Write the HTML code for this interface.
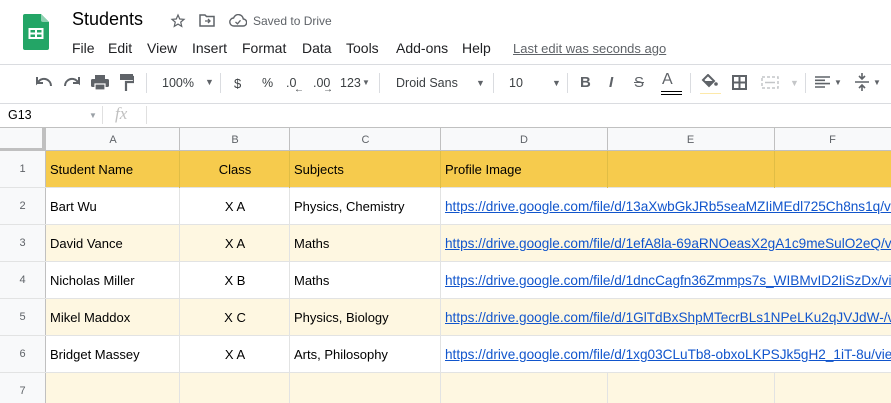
<!DOCTYPE html>
<html><head><meta charset="utf-8"><style>
*{margin:0;padding:0;box-sizing:border-box}
body{width:891px;height:403px;overflow:hidden;background:#fff;font-family:"Liberation Sans",Arial,sans-serif;position:relative;color:#202124}
.a{position:absolute;white-space:nowrap}
.ic{position:absolute;color:#5f6368;font-size:14px}
.sep{position:absolute;top:73px;width:1px;height:20px;background:#dadce0}
.cell{position:absolute;font-size:13px;line-height:37px;padding-left:4px;overflow:hidden;white-space:nowrap;color:#000}
a{color:#1155cc;text-decoration:underline;font-size:13.6px}
</style></head><body>
<svg class="a" style="left:23px;top:14px" width="26" height="36" viewBox="0 0 26 36"><path d="M2 0h16l8 8v26a2 2 0 0 1-2 2H2a2 2 0 0 1-2-2V2a2 2 0 0 1 2-2z" fill="#23a566"/><path d="M18 0l8 8h-6a2 2 0 0 1-2-2z" fill="#8ed1b1"/><rect x="5.5" y="14" width="15" height="11" fill="#fff"/><rect x="7.5" y="16" width="4.5" height="2.5" fill="#23a566"/><rect x="14" y="16" width="4.5" height="2.5" fill="#23a566"/><rect x="7.5" y="20.5" width="4.5" height="2.5" fill="#23a566"/><rect x="14" y="20.5" width="4.5" height="2.5" fill="#23a566"/></svg>
<div class="a" style="left:72px;top:9px;font-size:18px;color:#000">Students</div>
<svg class="a" style="left:170px;top:13px" width="16" height="16" viewBox="0 0 24 24"><path d="M12 3l2.6 6 6.4.5-4.9 4.2 1.5 6.3L12 16.7 6.4 20l1.5-6.3L3 9.5l6.4-.5z" fill="none" stroke="#5f6368" stroke-width="1.8"/></svg>
<svg class="a" style="left:199px;top:14px" width="16" height="13" viewBox="0 0 16 13"><path d="M1 1h5l1.5 1.5H15V12H1z" fill="none" stroke="#5f6368" stroke-width="1.5"/><path d="M6 7h5M9 5l2 2-2 2" fill="none" stroke="#5f6368" stroke-width="1.3"/></svg>
<svg class="a" style="left:229px;top:14px" width="18" height="13" viewBox="0 0 18 13"><path d="M5 12h9a3.5 3.5 0 0 0 .3-7A5 5 0 0 0 4.6 4 4 4 0 0 0 5 12z" fill="none" stroke="#5f6368" stroke-width="1.4"/><path d="M6.5 8l2 1.8 3-3.5" fill="none" stroke="#5f6368" stroke-width="1.3"/></svg>
<div class="a" style="left:253px;top:14px;font-size:12px;color:#5f6368">Saved to Drive</div>
<div class="a" style="left:72px;top:40px;font-size:14px;color:#202124">
<span style="position:absolute;left:0">File</span><span style="position:absolute;left:36px">Edit</span><span style="position:absolute;left:75px">View</span><span style="position:absolute;left:120px">Insert</span><span style="position:absolute;left:170px">Format</span><span style="position:absolute;left:230px">Data</span><span style="position:absolute;left:274px">Tools</span><span style="position:absolute;left:324px">Add-ons</span><span style="position:absolute;left:390px">Help</span></div>
<div class="a" style="left:513px;top:41px;font-size:13px;color:#5f6368;text-decoration:underline">Last edit was seconds ago</div>
<div class="a" style="left:0;top:64px;width:891px;height:1px;background:#dadce0"></div>
<svg class="a" style="left:35px;top:76px" width="18" height="12" viewBox="0 0 18 12"><path d="M16 10A7 7 0 0 0 4 5L2 7V1M2 7h6" fill="none" stroke="#5f6368" stroke-width="2"/></svg>
<svg class="a" style="left:63px;top:76px" width="18" height="12" viewBox="0 0 18 12"><path d="M2 10A7 7 0 0 1 14 5l2 2V1M16 7h-6" fill="none" stroke="#5f6368" stroke-width="2"/></svg>
<svg class="a" style="left:91px;top:75px" width="18" height="16" viewBox="0 0 18 16"><rect x="4" y="0" width="10" height="4" fill="#5f6368"/><rect x="0" y="4" width="18" height="8" rx="1.5" fill="#5f6368"/><rect x="4" y="9" width="10" height="6" fill="#5f6368" stroke="#fff" stroke-width="1.2"/></svg>
<svg class="a" style="left:120px;top:74px" width="14" height="17" viewBox="0 0 14 17"><rect x="0" y="0" width="13" height="6" fill="#5f6368"/><path d="M13 3h1v5H6v9" fill="none" stroke="#5f6368" stroke-width="2.2"/></svg>
<div class="sep" style="left:146px"></div>
<div class="a" style="left:162px;top:76px;font-size:12.5px;color:#3c4043">100%</div>
<div class="a" style="left:205px;top:77px;font-size:9px;color:#5f6368">▼</div>
<div class="sep" style="left:220px"></div>
<div class="a" style="left:234px;top:76px;font-size:13px;color:#3c4043">$</div>
<div class="a" style="left:262px;top:76px;font-size:12.5px;color:#3c4043">%</div>
<div class="a" style="left:286px;top:76px;font-size:12.5px;color:#3c4043">.0</div>
<div class="a" style="left:294px;top:84px;font-size:10px;color:#3c4043">←</div>
<div class="a" style="left:313px;top:76px;font-size:12.5px;color:#3c4043">.00</div>
<div class="a" style="left:323px;top:84px;font-size:10px;color:#3c4043">→</div>
<div class="a" style="left:340px;top:76px;font-size:12.5px;color:#3c4043">123</div>
<div class="a" style="left:362px;top:78px;font-size:8px;color:#5f6368">▼</div>
<div class="sep" style="left:379px"></div>
<div class="a" style="left:396px;top:76px;font-size:12.5px;color:#3c4043">Droid Sans</div>
<div class="a" style="left:476px;top:78px;font-size:9px;color:#5f6368">▼</div>
<div class="sep" style="left:493px"></div>
<div class="a" style="left:509px;top:76px;font-size:12.5px;color:#3c4043">10</div>
<div class="a" style="left:552px;top:78px;font-size:9px;color:#5f6368">▼</div>
<div class="sep" style="left:567px"></div>
<div class="a" style="left:580px;top:74px;font-size:15px;font-weight:bold;color:#5f6368">B</div>
<div class="a" style="left:609px;top:74px;font-size:15px;font-style:italic;font-weight:bold;color:#5f6368">I</div>
<div class="a" style="left:634px;top:74px;font-size:15px;color:#5f6368;text-decoration:line-through">S</div>
<div class="a" style="left:662px;top:71px;font-size:16px;color:#5f6368">A</div>
<div class="a" style="left:661px;top:91px;width:21px;height:4px;border-top:1px solid #000;border-bottom:1px solid #000"></div>
<div class="sep" style="left:690px"></div>
<svg class="a" style="left:701px;top:74px" width="18" height="14" viewBox="0 0 18 14"><path d="M7 1l6 6-5 5-6-6z" fill="none" stroke="#5f6368" stroke-width="2"/><path d="M3 7h9l-4 4z" fill="#5f6368"/><circle cx="15" cy="10" r="1.8" fill="#5f6368"/></svg>
<div class="a" style="left:700px;top:93px;width:21px;height:1px;background:#fde9a9"></div>
<svg class="a" style="left:732px;top:75px" width="15" height="15" viewBox="0 0 15 15"><path d="M1 1h13v13H1zM7.5 1v13M1 7.5h13" fill="none" stroke="#5f6368" stroke-width="2"/></svg>
<svg class="a" style="left:761px;top:76px" width="18" height="13" viewBox="0 0 18 13"><path d="M1 1h16v11H1z" fill="none" stroke="#c4c6c8" stroke-width="1.5" stroke-dasharray="3 2"/><path d="M4 6.5h10" stroke="#c4c6c8" stroke-width="1.5"/></svg>
<div class="a" style="left:790px;top:78px;font-size:9px;color:#c4c6c8">▼</div>
<div class="sep" style="left:805px"></div>
<svg class="a" style="left:815px;top:76px" width="15" height="12" viewBox="0 0 15 12"><path d="M0 1h15M0 4.3h10M0 7.6h15M0 11h10" stroke="#5f6368" stroke-width="1.6"/></svg>
<div class="a" style="left:834px;top:78px;font-size:8px;color:#5f6368">▼</div>
<svg class="a" style="left:855px;top:73px" width="14" height="18" viewBox="0 0 14 18"><path d="M0 9h14M7 0v6M4 3l3 3 3-3M7 18v-6M4 15l3-3 3 3" fill="none" stroke="#5f6368" stroke-width="1.6"/></svg>
<div class="a" style="left:873px;top:78px;font-size:8px;color:#5f6368">▼</div>
<div class="a" style="left:0;top:103px;width:891px;height:1px;background:#dadce0"></div>
<div class="a" style="left:8px;top:108px;font-size:12.5px;color:#000">G13</div>
<div class="a" style="left:89px;top:111px;font-size:8px;color:#9aa0a6">▼</div>
<div class="a" style="left:102px;top:106px;width:1px;height:18px;background:#e0e0e0"></div>
<div class="a" style="left:115px;top:104px;font-size:17px;font-style:italic;font-family:'Liberation Serif',serif;color:#c0c0c0">fx</div>
<div class="a" style="left:146px;top:106px;width:1px;height:18px;background:#e0e0e0"></div>
<div class="a" style="left:0;top:127px;width:891px;height:24px;background:#f8f9fa;border-top:1px solid #c0c0c0;border-bottom:1px solid #c0c0c0"></div>
<div class="a" style="left:0;top:151px;width:46px;height:252px;background:#f8f9fa"></div>
<div class="a" style="left:42px;top:127px;width:4px;height:24px;background:#c0c0c0"></div>
<div class="a" style="left:0;top:148px;width:46px;height:3px;background:#c0c0c0"></div>
<div class="a" style="left:45px;top:151px;width:1px;height:252px;background:#c0c0c0"></div>
<div style="font-size:11px;color:#5f6368">
<div class="a" style="left:46px;top:134px;width:134px;text-align:center">A</div>
<div class="a" style="left:180px;top:134px;width:110px;text-align:center">B</div>
<div class="a" style="left:290px;top:134px;width:151px;text-align:center">C</div>
<div class="a" style="left:441px;top:134px;width:166px;text-align:center">D</div>
<div class="a" style="left:607px;top:134px;width:167px;text-align:center">E</div>
<div class="a" style="left:774px;top:134px;width:117px;text-align:center">F</div>
<div class="a" style="left:0;top:163px;width:45px;text-align:center">1</div>
<div class="a" style="left:0;top:200px;width:45px;text-align:center">2</div>
<div class="a" style="left:0;top:237px;width:45px;text-align:center">3</div>
<div class="a" style="left:0;top:274px;width:45px;text-align:center">4</div>
<div class="a" style="left:0;top:311px;width:45px;text-align:center">5</div>
<div class="a" style="left:0;top:348px;width:45px;text-align:center">6</div>
<div class="a" style="left:0;top:385px;width:45px;text-align:center">7</div>
</div>
<div class="a" style="left:179px;top:127px;width:1px;height:24px;background:#c0c0c0"></div>
<div class="a" style="left:289px;top:127px;width:1px;height:24px;background:#c0c0c0"></div>
<div class="a" style="left:440px;top:127px;width:1px;height:24px;background:#c0c0c0"></div>
<div class="a" style="left:607px;top:127px;width:1px;height:24px;background:#c0c0c0"></div>
<div class="a" style="left:774px;top:127px;width:1px;height:24px;background:#c0c0c0"></div>
<div class="a" style="left:46px;top:151px;width:845px;height:37px;background:#f6cb4d"></div>
<div class="a" style="left:46px;top:225px;width:845px;height:37px;background:#fef7e1"></div>
<div class="a" style="left:46px;top:299px;width:845px;height:37px;background:#fef7e1"></div>
<div class="a" style="left:46px;top:373px;width:845px;height:30px;background:#fef7e1"></div>
<div class="a" style="left:0;top:187px;width:891px;height:1px;background:#e2e3e3"></div>
<div class="a" style="left:0;top:224px;width:891px;height:1px;background:#e2e3e3"></div>
<div class="a" style="left:0;top:261px;width:891px;height:1px;background:#e2e3e3"></div>
<div class="a" style="left:0;top:298px;width:891px;height:1px;background:#e2e3e3"></div>
<div class="a" style="left:0;top:335px;width:891px;height:1px;background:#e2e3e3"></div>
<div class="a" style="left:0;top:372px;width:891px;height:1px;background:#e2e3e3"></div>
<div class="a" style="left:179px;top:151px;width:1px;height:252px;background:#e2e3e3"></div>
<div class="a" style="left:289px;top:151px;width:1px;height:252px;background:#e2e3e3"></div>
<div class="a" style="left:440px;top:151px;width:1px;height:252px;background:#e2e3e3"></div>
<div class="a" style="left:607px;top:151px;width:1px;height:37px;background:#e0bd45"></div>
<div class="a" style="left:774px;top:151px;width:1px;height:37px;background:#e0bd45"></div>
<div class="a" style="left:179px;top:151px;width:1px;height:37px;background:#e0bd45"></div>
<div class="a" style="left:289px;top:151px;width:1px;height:37px;background:#e0bd45"></div>
<div class="a" style="left:440px;top:151px;width:1px;height:37px;background:#e0bd45"></div>
<div class="a" style="left:607px;top:373px;width:1px;height:30px;background:#e2e3e3"></div>
<div class="a" style="left:774px;top:373px;width:1px;height:30px;background:#e2e3e3"></div>
<div class="cell" style="left:46px;top:151px">Student Name</div>
<div class="cell" style="left:180px;top:151px;width:110px;text-align:center;padding:0">Class</div>
<div class="cell" style="left:290px;top:151px">Subjects</div>
<div class="cell" style="left:441px;top:151px">Profile Image</div>
<div class="cell" style="left:46px;top:188px">Bart Wu</div>
<div class="cell" style="left:180px;top:188px;width:110px;text-align:center;padding:0">X A</div>
<div class="cell" style="left:290px;top:188px">Physics, Chemistry</div>
<div class="cell" style="left:441px;top:188px;width:450px"><a>https://drive.google.com/file/d/13aXwbGkJRb5seaMZIiMEdl725Ch8ns1q/view</a></div>
<div class="cell" style="left:46px;top:225px">David Vance</div>
<div class="cell" style="left:180px;top:225px;width:110px;text-align:center;padding:0">X A</div>
<div class="cell" style="left:290px;top:225px">Maths</div>
<div class="cell" style="left:441px;top:225px;width:450px"><a>https://drive.google.com/file/d/1efA8la-69aRNOeasX2gA1c9meSulO2eQ/view</a></div>
<div class="cell" style="left:46px;top:262px">Nicholas Miller</div>
<div class="cell" style="left:180px;top:262px;width:110px;text-align:center;padding:0">X B</div>
<div class="cell" style="left:290px;top:262px">Maths</div>
<div class="cell" style="left:441px;top:262px;width:450px"><a>https://drive.google.com/file/d/1dncCagfn36Zmmps7s_WIBMvID2IiSzDx/view</a></div>
<div class="cell" style="left:46px;top:299px">Mikel Maddox</div>
<div class="cell" style="left:180px;top:299px;width:110px;text-align:center;padding:0">X C</div>
<div class="cell" style="left:290px;top:299px">Physics, Biology</div>
<div class="cell" style="left:441px;top:299px;width:450px"><a>https://drive.google.com/file/d/1GlTdBxShpMTecrBLs1NPeLKu2qJVJdW-/view</a></div>
<div class="cell" style="left:46px;top:336px">Bridget Massey</div>
<div class="cell" style="left:180px;top:336px;width:110px;text-align:center;padding:0">X A</div>
<div class="cell" style="left:290px;top:336px">Arts, Philosophy</div>
<div class="cell" style="left:441px;top:336px;width:450px"><a>https://drive.google.com/file/d/1xg03CLuTb8-obxoLKPSJk5gH2_1iT-8u/view</a></div>
</body></html>
